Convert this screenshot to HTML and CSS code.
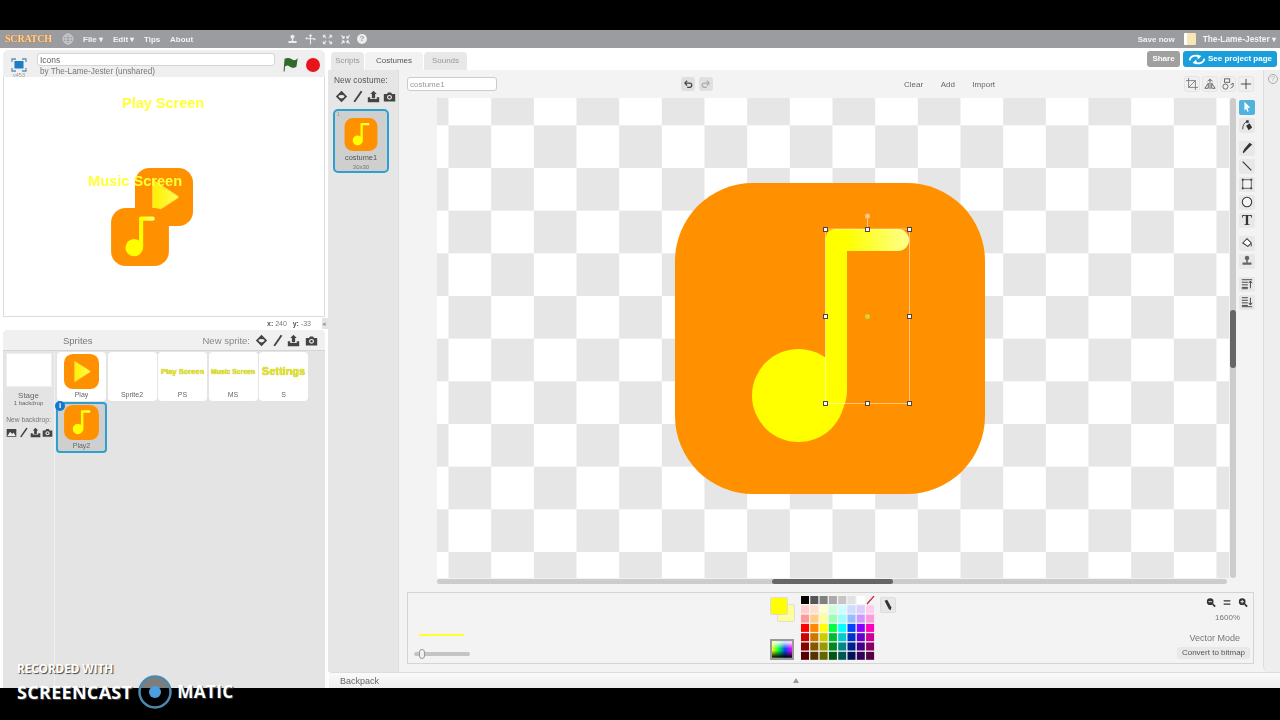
FILE: index.html
```html
<!DOCTYPE html>
<html lang="en">
<head>
    <meta charset="UTF-8">
    <title>Scratch - Icons</title>
    <link rel="stylesheet" href="styles.css">
</head>
<body>
    <svg class="defs" width="0" height="0">
        <defs>
            <linearGradient id="smallFlag" gradientUnits="userSpaceOnUse" x1="172" y1="0" x2="234" y2="0">
                <stop offset="0" stop-color="#ff0"/>
                <stop offset="1" stop-color="#ffff8c"/>
            </linearGradient>
            <linearGradient id="smallPlay" gradientUnits="userSpaceOnUse" x1="30" y1="0" x2="80" y2="0">
                <stop offset="0" stop-color="#ffee00"/>
                <stop offset="1" stop-color="#ffff50"/>
            </linearGradient>
        </defs>
        <symbol id="music" viewBox="0 0 310 311">
            <rect width="310" height="311" rx="78" fill="#ff9100"/>
            <circle cx="123.500" cy="212.500" r="46.500" fill="#ff0"/>
            <path d="M150 225V55Q150 46 159 46H223A11 11 0 0 1 223 68H172V207Q172 217 168 225Z" fill="url(#smallFlag)"/>
        </symbol>
        <symbol id="play" viewBox="0 0 104 104">
            <rect width="104" height="104" rx="26" fill="#ff9100"/>
            <path d="M32 22L76 50Q79 52 76 54L32 82Z" fill="url(#smallPlay)" stroke="#ffe24a" stroke-width="2" stroke-linejoin="round"/>
        </symbol>
        <symbol id="lib" viewBox="0 0 16 16">
            <path d="M8 1L15 8L8 15L1 8Z" fill="currentColor"/>
            <path d="M4 7.500Q8 5 12 7.500Q11 10.500 8 10.500Q5 10.500 4 7.500Z" fill="#eee"/>
        </symbol>
        <symbol id="brush" viewBox="0 0 16 16">
            <path d="M12 1L14 2L5 15L3 14Z" fill="currentColor"/>
        </symbol>
        <symbol id="upload" viewBox="0 0 16 16">
            <path d="M1 9H4V11H12V9H15V15H1Z" fill="currentColor"/>
            <path d="M8 1L12 5H10V10H6V5H4Z" fill="currentColor"/>
        </symbol>
        <symbol id="camera" viewBox="0 0 16 16">
            <path d="M1 5H5L6 3H10L11 5H15V14H1Z" fill="currentColor"/>
            <circle cx="8" cy="9" r="3" fill="#eee"/>
            <circle cx="8" cy="9" r="1.500" fill="currentColor"/>
        </symbol>
        <symbol id="stamp" viewBox="0 0 16 16">
            <circle cx="8" cy="4" r="3" fill="currentColor"/>
            <path d="M7 6H9V10H14V13H2V10H7Z" fill="currentColor"/>
        </symbol>
    </svg>

    <div class="letterbox"></div>

    <header class="menubar">
        <span class="logo">SCRATCH</span>
        <svg class="globe" viewBox="0 0 12 12"><circle cx="6" cy="6" r="5"/><ellipse cx="6" cy="6" rx="2.200" ry="5"/><path d="M1 6H11M2 3.200H10M2 8.800H10"/></svg>
        <span class="menu-item file">File ▾</span>
        <span class="menu-item edit">Edit ▾</span>
        <span class="menu-item tips">Tips</span>
        <span class="menu-item about">About</span>
        <div class="menu-tools">
            <svg viewBox="0 0 16 16"><use href="#stamp"/></svg>
            <svg viewBox="0 0 16 16"><path d="M8 1V15M1 7H15M8 1L6 3M8 1L10 3M1 7L3 5M15 7L13 9" stroke="currentColor" stroke-width="1.600" fill="none"/></svg>
            <svg viewBox="0 0 16 16"><path d="M2 2L6 6M14 2L10 6M2 14L6 10M14 14L10 10M2 2H5M2 2V5M14 2H11M14 2V5M2 14H5M2 14V11M14 14H11M14 14V11" stroke="currentColor" stroke-width="1.600" fill="none"/></svg>
            <svg viewBox="0 0 16 16"><path d="M2 2L6 6M14 2L10 6M2 14L6 10M14 14L10 10M6 6H3M6 6V3M10 6H13M10 6V3M6 10H3M6 10V13M10 10H13M10 10V13" stroke="currentColor" stroke-width="1.600" fill="none"/></svg>
            <span class="help-dot">?</span>
        </div>
        <div class="account">
            <span class="save-now">Save now</span>
            <span class="folder"></span>
            <span class="username">The-Lame-Jester ▾</span>
        </div>
    </header>

    <main class="workspace">
        <section class="left-col">
            <div class="stage-head">
                <div class="fullscreen">
                    <svg viewBox="0 0 16 14"><rect x="3.500" y="3" width="9" height="7.500" fill="#1c7cc4"/><path d="M1 4V1H5M11 1H15V4M1 10V13H5M11 13H15V10" stroke="#5a94bd" stroke-width="1.300" fill="none"/></svg>
                    <span>v453</span>
                </div>
                <div class="project-meta">
                    <input class="project-name" type="text" value="Icons">
                    <span class="project-by">by The-Lame-Jester (unshared)</span>
                </div>
                <svg class="flag" viewBox="0 0 14 14"><path d="M2 1.500L1 13.500M2 2Q5 .500 8 2.500T13 2.500L12 9Q9 10.500 6.500 8.500T1.500 8.500Z" fill="#2e6b2c" stroke="#2e6b2c"/></svg>
                <span class="stop"></span>
            </div>
            <div class="stage">
                <span class="stage-text play-screen">Play Screen</span>
                <svg class="stage-icon stage-play"><use href="#play"/></svg>
                <svg class="stage-icon stage-music"><use href="#music"/></svg>
                <span class="stage-text music-screen">Music Screen</span>
            </div>
            <div class="coords">
                <span><b>x:</b> 240 &nbsp;&nbsp;<b>y:</b> -33</span>
                <span class="collapse">◂</span>
            </div>
            <div class="sprites">
                <div class="sprites-head">
                    <span class="sprites-title">Sprites</span>
                    <span class="new-sprite">New sprite:</span>
                    <svg class="act"><use href="#lib"/></svg>
                    <svg class="act"><use href="#brush"/></svg>
                    <svg class="act"><use href="#upload"/></svg>
                    <svg class="act"><use href="#camera"/></svg>
                </div>
                <div class="sprites-body">
                    <aside class="stage-col">
                        <div class="stage-thumb"></div>
                        <div class="stage-label">Stage</div>
                        <div class="stage-sub">1 backdrop</div>
                        <div class="new-backdrop">New backdrop:</div>
                        <div class="backdrop-acts">
                            <svg viewBox="0 0 16 16"><path d="M1 3H15V14H1Z" fill="#444"/><path d="M2 13L6 7L9 10L11 8L14 13Z" fill="#eee"/></svg>
                            <svg><use href="#brush"/></svg>
                            <svg><use href="#upload"/></svg>
                            <svg><use href="#camera"/></svg>
                        </div>
                    </aside>
                    <div class="sprite-grid">
                        <div class="tile">
                            <svg class="tile-icon"><use href="#play"/></svg>
                            <span>Play</span>
                        </div>
                        <div class="tile">
                            <div class="tile-pic"></div>
                            <span>Sprite2</span>
                        </div>
                        <div class="tile">
                            <div class="tile-pic tile-word">Play Screen</div>
                            <span>PS</span>
                        </div>
                        <div class="tile">
                            <div class="tile-pic tile-word small">Music Screen</div>
                            <span>MS</span>
                        </div>
                        <div class="tile">
                            <div class="tile-pic tile-word big">Settings</div>
                            <span>S</span>
                        </div>
                        <div class="tile selected">
                            <span class="info">i</span>
                            <svg class="tile-icon"><use href="#music"/></svg>
                            <span>Play2</span>
                        </div>
                    </div>
                </div>
            </div>
        </section>

        <section class="right-col">
            <div class="top-row">
                <nav class="tabs">
                    <span class="tab">Scripts</span>
                    <span class="tab active">Costumes</span>
                    <span class="tab">Sounds</span>
                </nav>
                <span class="share">Share</span>
                <span class="see-page">
                    <svg viewBox="0 0 18 12"><path d="M1 7A6 5 0 0 1 11 3M17 5A6 5 0 0 1 7 9" stroke="#fff" stroke-width="2" fill="none"/><path d="M9 .500L14 2L10 6ZM9 11.500L4 10L8 6Z" fill="#fff"/></svg>
                    See project page
                </span>
            </div>
            <div class="main-panel">
                <aside class="costumes">
                    <div class="new-costume">New costume:</div>
                    <div class="costume-acts">
                        <svg><use href="#lib"/></svg>
                        <svg><use href="#brush"/></svg>
                        <svg><use href="#upload"/></svg>
                        <svg><use href="#camera"/></svg>
                    </div>
                    <div class="costume-card">
                        <span class="costume-num">1</span>
                        <svg class="costume-icon"><use href="#music"/></svg>
                        <span class="costume-name">costume1</span>
                        <span class="costume-size">30x30</span>
                    </div>
                </aside>

                <div class="editor">
                    <div class="edit-bar">
                        <input class="costume-input" type="text" value="costume1">
                        <div class="undo-group">
                            <span class="ed-btn"><svg viewBox="0 0 12 12"><path d="M2 5H8A2.500 2.500 0 0 1 8 10H5M2 5L5 2M2 5L5 8" stroke="#444" stroke-width="1.500" fill="none"/></svg></span>
                            <span class="ed-btn"><svg viewBox="0 0 12 12"><path d="M10 5H4A2.500 2.500 0 0 0 4 10H7M10 5L7 2M10 5L7 8" stroke="#aaa" stroke-width="1.500" fill="none"/></svg></span>
                        </div>
                        <div class="file-group">
                            <span>Clear</span>
                            <span>Add</span>
                            <span>Import</span>
                        </div>
                        <div class="view-group">
                            <span class="view-btn"><svg viewBox="0 0 14 14"><path d="M3 0V11H14M0 3H11V14M3 11L11 3" stroke="#777" fill="none"/></svg></span>
                            <span class="view-btn"><svg viewBox="0 0 14 14"><path d="M5 6L1 12H5ZM9 6V12H13Z" stroke="#555" fill="none"/><path d="M7 1V13M4 4Q7 0 10 4" stroke="#555" fill="none"/></svg></span>
                            <span class="view-btn"><svg viewBox="0 0 14 14"><rect x="3" y="1" width="6" height="4" stroke="#555" fill="none"/><circle cx="4" cy="10" r="3" stroke="#555" fill="none"/><path d="M10 8L13 6V10L10 12" stroke="#555" fill="none"/></svg></span>
                            <span class="view-btn"><svg viewBox="0 0 14 14"><path d="M7 1V13M1 7H13" stroke="#333"/></svg></span>
                        </div>
                    </div>

                    <div class="canvas-row">
                        <div class="canvas">
                            <svg class="art" viewBox="437 98 792 480">
                                <defs>
                                    <linearGradient id="flagFade" gradientUnits="userSpaceOnUse" x1="847" y1="0" x2="909" y2="0">
                                        <stop offset="0" stop-color="#ff0"/>
                                        <stop offset="1" stop-color="#ffff8c"/>
                                    </linearGradient>
                                </defs>
                                <rect x="675" y="183" width="310" height="311" rx="78" fill="#ff9100"/>
                                <circle cx="798.500" cy="395.500" r="46.500" fill="#ff0"/>
                                <path d="M825.500 408V240Q825.500 229 836 229H898A11 11 0 0 1 898 251H847V390Q847 400 843 408Z" fill="url(#flagFade)"/>
                                <path d="M825.500 229H909.500V403.500H825.500Z" fill="none" stroke="#fff" stroke-opacity=".5"/>
                                <path d="M867.500 229V217" stroke="#fff" stroke-opacity=".5"/>
                                <circle cx="867.500" cy="216" r="2.500" fill="#ffc98a"/>
                                <circle cx="867.500" cy="316.500" r="2.500" fill="#d8d040"/>
                                <g class="handles">
                                    <rect x="823.500" y="227.500" width="4" height="4"/>
                                    <rect x="865.500" y="227.500" width="4" height="4"/>
                                    <rect x="907.500" y="227.500" width="4" height="4"/>
                                    <rect x="823.500" y="314.500" width="4" height="4"/>
                                    <rect x="907.500" y="314.500" width="4" height="4"/>
                                    <rect x="823.500" y="401.500" width="4" height="4"/>
                                    <rect x="865.500" y="401.500" width="4" height="4"/>
                                    <rect x="907.500" y="401.500" width="4" height="4"/>
                                </g>
                            </svg>
                        </div>
                        <div class="vscroll"><div class="vthumb"></div></div>
                        <div class="tools">
                            <div class="tool-group">
                                <span class="tool on"><svg viewBox="0 0 14 14"><path d="M4 1L11 8H7.500L9 12L7.500 12.500L6 9L4 11Z" fill="#fff"/></svg></span>
                                <span class="tool"><svg viewBox="0 0 14 14"><path d="M2 12Q2 5 7 3" stroke="#333" fill="none"/><rect x="6" y="1.500" width="3" height="3" fill="#333"/><path d="M6 8L10 5L13 10L9 13Z" fill="#333"/></svg></span>
                            </div>
                            <div class="tool-group">
                                <span class="tool"><svg viewBox="0 0 14 14"><path d="M10 1L13 3L6 10L3 13L2 12L4 8Z" fill="#333"/></svg></span>
                                <span class="tool"><svg viewBox="0 0 14 14"><path d="M2 2L12 12" stroke="#333" stroke-width="1.300"/></svg></span>
                                <span class="tool"><svg viewBox="0 0 14 14"><rect x="2" y="2" width="10" height="10" fill="#f4f4f4" stroke="#666" stroke-width="1.200"/><path d="M1 1H3V3H1ZM11 1H13V3H11ZM1 11H3V13H1ZM11 11H13V13H11Z" fill="#333"/></svg></span>
                                <span class="tool"><svg viewBox="0 0 14 14"><circle cx="7" cy="7" r="5.500" fill="#f4f4f4" stroke="#333" stroke-width="1.200"/></svg></span>
                                <span class="tool tool-t">T</span>
                            </div>
                            <div class="tool-group">
                                <span class="tool"><svg viewBox="0 0 14 14"><path d="M2 7L7 2L12 7L8 11Z" fill="#fff" stroke="#333" stroke-width="1.200"/><path d="M12 8V11" stroke="#333"/></svg></span>
                                <span class="tool"><svg viewBox="0 0 16 16"><use href="#stamp"/></svg></span>
                            </div>
                            <div class="tool-group">
                                <span class="tool"><svg viewBox="0 0 14 14"><path d="M1 2H13M1 5H8M1 8H8M1 11H8M1 12.500H8M11 12V4M9 6L11 3.500L13 6" stroke="#333" fill="none"/></svg></span>
                                <span class="tool"><svg viewBox="0 0 14 14"><path d="M1 2H8M1 5H8M1 8H8M1 11H8M1 12.500H13M11 2V10M9 8L11 10.500L13 8" stroke="#333" fill="none"/></svg></span>
                            </div>
                        </div>
                    </div>
                    <div class="hscroll"><div class="hthumb"></div></div>

                    <div class="paint-panel">
                        <div class="stroke-col">
                            <div class="stroke-line"></div>
                            <div class="slider"><span class="knob"></span></div>
                        </div>
                        <div class="swatch-col">
                            <div class="swatches">
                                <span class="swatch-back"></span>
                                <span class="swatch-front"></span>
                            </div>
                            <svg class="spectrum" viewBox="0 0 22 18">
                                <defs>
                                    <linearGradient id="hue">
                                        <stop offset="0" stop-color="#ff0"/>
                                        <stop offset=".33" stop-color="#0f4"/>
                                        <stop offset=".66" stop-color="#04f"/>
                                        <stop offset="1" stop-color="#f0f"/>
                                    </linearGradient>
                                    <linearGradient id="shade" x1="0" y1="0" x2="0" y2="1">
                                        <stop offset="0" stop-color="#fff"/>
                                        <stop offset=".45" stop-color="#fff" stop-opacity="0"/>
                                        <stop offset=".55" stop-color="#000" stop-opacity="0"/>
                                        <stop offset="1" stop-color="#000"/>
                                    </linearGradient>
                                </defs>
                                <rect width="22" height="18" fill="url(#hue)"/>
                                <rect width="22" height="18" fill="url(#shade)"/>
                            </svg>
                        </div>
                        <svg class="palette" viewBox="0 0 74 64">
                            <rect x="0" y="0" width="8" height="8" fill="#000"/><rect x="9.300" y="0" width="8" height="8" fill="#555"/><rect x="18.600" y="0" width="8" height="8" fill="#808080"/><rect x="27.900" y="0" width="8" height="8" fill="#aaa"/><rect x="37.200" y="0" width="8" height="8" fill="#c6c6c6"/><rect x="46.500" y="0" width="8" height="8" fill="#e2e2e2"/><rect x="55.800" y="0" width="8" height="8" fill="#fff"/><path d="M66 8L73 0" stroke="#c22030" stroke-width="1.200"/>
                            <rect x="0" y="9.300" width="8" height="8" fill="#fcc"/><rect x="9.300" y="9.300" width="8" height="8" fill="#ffe0cc"/><rect x="18.600" y="9.300" width="8" height="8" fill="#ffc"/><rect x="27.900" y="9.300" width="8" height="8" fill="#cfd"/><rect x="37.200" y="9.300" width="8" height="8" fill="#cff"/><rect x="46.500" y="9.300" width="8" height="8" fill="#cdf"/><rect x="55.800" y="9.300" width="8" height="8" fill="#dcf"/><rect x="65.100" y="9.300" width="8" height="8" fill="#fce"/>
                            <rect x="0" y="18.600" width="8" height="8" fill="#f99"/><rect x="9.300" y="18.600" width="8" height="8" fill="#fc8"/><rect x="18.600" y="18.600" width="8" height="8" fill="#ff9"/><rect x="27.900" y="18.600" width="8" height="8" fill="#9fb"/><rect x="37.200" y="18.600" width="8" height="8" fill="#9ff"/><rect x="46.500" y="18.600" width="8" height="8" fill="#9bf"/><rect x="55.800" y="18.600" width="8" height="8" fill="#c9f"/><rect x="65.100" y="18.600" width="8" height="8" fill="#f9d"/>
                            <rect x="0" y="27.900" width="8" height="8" fill="#f00"/><rect x="9.300" y="27.900" width="8" height="8" fill="#f80"/><rect x="18.600" y="27.900" width="8" height="8" fill="#ff0"/><rect x="27.900" y="27.900" width="8" height="8" fill="#0f4"/><rect x="37.200" y="27.900" width="8" height="8" fill="#0ff"/><rect x="46.500" y="27.900" width="8" height="8" fill="#04f"/><rect x="55.800" y="27.900" width="8" height="8" fill="#80f"/><rect x="65.100" y="27.900" width="8" height="8" fill="#f0b"/>
                            <rect x="0" y="37.200" width="8" height="8" fill="#c00"/><rect x="9.300" y="37.200" width="8" height="8" fill="#c70"/><rect x="18.600" y="37.200" width="8" height="8" fill="#cc0"/><rect x="27.900" y="37.200" width="8" height="8" fill="#0b3"/><rect x="37.200" y="37.200" width="8" height="8" fill="#0cc"/><rect x="46.500" y="37.200" width="8" height="8" fill="#03c"/><rect x="55.800" y="37.200" width="8" height="8" fill="#60c"/><rect x="65.100" y="37.200" width="8" height="8" fill="#c09"/>
                            <rect x="0" y="46.500" width="8" height="8" fill="#800"/><rect x="9.300" y="46.500" width="8" height="8" fill="#850"/><rect x="18.600" y="46.500" width="8" height="8" fill="#990"/><rect x="27.900" y="46.500" width="8" height="8" fill="#082"/><rect x="37.200" y="46.500" width="8" height="8" fill="#088"/><rect x="46.500" y="46.500" width="8" height="8" fill="#028"/><rect x="55.800" y="46.500" width="8" height="8" fill="#408"/><rect x="65.100" y="46.500" width="8" height="8" fill="#806"/>
                            <rect x="0" y="55.800" width="8" height="8" fill="#500"/><rect x="9.300" y="55.800" width="8" height="8" fill="#530"/><rect x="18.600" y="55.800" width="8" height="8" fill="#660"/><rect x="27.900" y="55.800" width="8" height="8" fill="#051"/><rect x="37.200" y="55.800" width="8" height="8" fill="#055"/><rect x="46.500" y="55.800" width="8" height="8" fill="#015"/><rect x="55.800" y="55.800" width="8" height="8" fill="#305"/><rect x="65.100" y="55.800" width="8" height="8" fill="#504"/>
                        </svg>
                        <span class="picker"><svg viewBox="0 0 14 14"><path d="M3 2L6 1L11 10L10 13L8 12Z" fill="#333"/></svg></span>
                        <div class="mode-col">
                            <div class="zoom-btns">
                                <svg viewBox="0 0 12 12"><circle cx="5" cy="5" r="4" fill="#333"/><path d="M3 5H7" stroke="#fff"/><path d="M8 8L11 11" stroke="#333" stroke-width="2"/></svg>
                                <svg viewBox="0 0 12 12"><path d="M2 4H10M2 8H10" stroke="#333" stroke-width="1.500"/></svg>
                                <svg viewBox="0 0 12 12"><circle cx="5" cy="5" r="4" fill="#333"/><path d="M3 5H7M5 3V7" stroke="#fff"/><path d="M8 8L11 11" stroke="#333" stroke-width="2"/></svg>
                            </div>
                            <div class="zoom-pct">1600%</div>
                            <div class="mode-name">Vector Mode</div>
                            <div class="convert">Convert to bitmap</div>
                        </div>
                    </div>
                </div>

                <aside class="help-strip"><span class="help-circle">?</span></aside>
            </div>
            <div class="backpack">
                <span>Backpack</span>
                <span class="backpack-arrow"></span>
            </div>
        </section>
    </main>

    <div class="letterbox bottom"></div>

    <div class="watermark">
        <div class="rec-with">RECORDED WITH</div>
        <div class="rec-brand">
            <span>SCREENCAST</span>
            <svg viewBox="0 0 36 36"><circle cx="18" cy="18" r="15.500" fill="#000" fill-opacity=".45" stroke="#4d88ad" stroke-width="2.500"/><circle cx="18" cy="18" r="6" fill="#4c9ee0"/></svg>
            <span class="matic">MATIC</span>
        </div>
    </div>
</body>
</html>
```

FILE: styles.css
```css
* {
    box-sizing: border-box;
}

body {
    margin: 0;
    width: 1280px;
    height: 720px;
    overflow: hidden;
    position: relative;
    display: flex;
    flex-direction: column;
    background: #000;
    font-family: "Liberation Sans", Arial, sans-serif;
    color: #666;
}

svg {
    display: block;
}

.defs {
    position: absolute;
}

.letterbox {
    height: 30px;
    background: #000;
}

.letterbox.bottom {
    height: 32px;
}

/* menu bar */
.menubar {
    height: 18px;
    background: #9b9ca0;
    display: flex;
    align-items: center;
    color: #f2f2f2;
    font-size: 8px;
    font-weight: bold;
    filter: blur(.3px);
}

.logo {
    margin-left: 5px;
    width: 45px;
    line-height: 12px;
    text-align: center;
    font-family: "Liberation Serif", serif;
    font-size: 10px;
    color: #f8d8a0;
    text-shadow: 0 0 1px #d0701c, 0 0 1px #d0701c;
    letter-spacing: -.2px;
}

.globe {
    width: 12px;
    height: 12px;
    margin-left: 12px;
    fill: none;
    stroke: #d8d8d8;
    stroke-width: .8;
}

.menu-item.file { margin-left: 9px; width: 30px; }
.menu-item.edit { width: 31px; }
.menu-item.tips { width: 26px; }
.menu-item.about { width: 26px; }

.menu-tools {
    margin-left: 91px;
    display: flex;
    align-items: center;
    gap: 6.500px;
    color: #ececec;
}

.menu-tools svg {
    width: 11px;
    height: 11px;
}

.help-dot {
    width: 10px;
    height: 10px;
    border-radius: 50%;
    background: #ececec;
    color: #9b9ca0;
    font-size: 8px;
    line-height: 10px;
    text-align: center;
}

.account {
    margin-left: auto;
    margin-right: 4px;
    display: flex;
    align-items: center;
}

.save-now {
    font-size: 8px;
}

.folder {
    width: 12px;
    height: 12px;
    margin: 0 7px 0 9px;
    background: #f6e7b4;
    border-radius: 1px;
    border-left: 3px solid #fff;
}

.username {
    font-size: 8.400px;
}

/* main area */
.workspace {
    height: 640px;
    display: flex;
    background: #fff;
    filter: blur(.3px);
}

.left-col {
    width: 328px;
    padding: 2px 3px 0;
    display: flex;
    flex-direction: column;
}

.stage-head {
    height: 27px;
    background: #efefef;
    border-radius: 5px 5px 0 0;
    display: flex;
    padding-left: 8px;
    position: relative;
}

.fullscreen {
    width: 16px;
    margin-top: 8px;
    text-align: center;
}

.fullscreen svg {
    width: 16px;
    height: 14px;
}

.fullscreen span {
    display: block;
    font-size: 5.500px;
    color: #999;
    line-height: 6px;
}

.project-meta {
    width: 238px;
    margin-left: 10px;
    padding-top: 3px;
}

.project-name {
    display: block;
    width: 238px;
    height: 13px;
    padding: 0 2px;
    border: 1px solid #d4d4d4;
    border-radius: 3px;
    background: #fff;
    font: 8.500px "Liberation Sans", Arial, sans-serif;
    color: #666;
}

.project-by {
    display: block;
    margin: 0 0 0 3px;
    font-size: 8.200px;
    line-height: 11px;
    color: #777;
}

.flag {
    width: 15px;
    height: 15px;
    margin: 7px 0 0 8px;
}

.stop {
    width: 14px;
    height: 14px;
    margin: 8px 0 0 8px;
    border-radius: 50%;
    background: #e8141c;
}

.stage {
    height: 240px;
    width: 322px;
    background: #fff;
    border: 1px solid #dcdcdc;
    border-top: 0;
    position: relative;
    overflow: hidden;
}

.stage-text {
    position: absolute;
    font-size: 14.500px;
    font-weight: bold;
    color: #ffff3a;
    white-space: nowrap;
}

.play-screen {
    left: 118px;
    top: 18px;
}

.music-screen {
    left: 84px;
    top: 96px;
    font-size: 14.600px;
}

.stage-icon {
    position: absolute;
    width: 58px;
    height: 58px;
}

.stage-play {
    left: 131px;
    top: 91px;
}

.stage-music {
    left: 107px;
    top: 131px;
}

.coords {
    height: 13px;
    display: flex;
    justify-content: flex-end;
    align-items: center;
    font-size: 7px;
    color: #777;
}

.coords b {
    color: #555;
}

.collapse {
    width: 6px;
    margin: 0 -3px 0 11px;
    color: #999;
    background: #e4e4e4;
    font-size: 7px;
    line-height: 11px;
}

.sprites {
    flex: 1;
    width: 322px;
    background: #e4e4e4;
    border-radius: 5px 5px 0 0;
    overflow: hidden;
}

.sprites-head {
    height: 21px;
    background: #f0f0f0;
    border-bottom: 1px solid #d4d4d4;
    display: flex;
    align-items: center;
    padding-left: 60px;
    gap: 3px;
    color: #777;
    font-size: 9.500px;
}

.new-sprite {
    margin-left: auto;
    margin-right: 2px;
    color: #888;
}

.act {
    width: 13px;
    height: 13px;
    color: #444;
}

.sprites-head .act:last-child {
    margin: 0 7px 0 2px;
}

.sprites-body {
    display: flex;
    height: 336px;
}

.stage-col {
    width: 52px;
    border-right: 1px solid #f0f0f0;
    text-align: center;
    color: #666;
    padding-top: 2px;
}

.stage-thumb {
    width: 46px;
    height: 34px;
    margin: 0 auto 3px 3px;
    background: #fff;
    border: 1px solid #eee;
}

.stage-label {
    font-size: 8px;
    margin-top: 5px;
    line-height: 8px;
}

.stage-sub {
    font-size: 6px;
    line-height: 7px;
}

.new-backdrop {
    font-size: 6.700px;
    margin-top: 9px;
    white-space: nowrap;
    color: #777;
}

.backdrop-acts {
    display: flex;
    justify-content: center;
    gap: 1px;
    margin: 4px 0 0 1px;
    color: #444;
}

.backdrop-acts svg {
    width: 11px;
    height: 11px;
}

.sprite-grid {
    flex: 1;
    padding: 1px 0 0 2px;
    display: flex;
    flex-wrap: wrap;
    align-content: flex-start;
    gap: 2px 1.500px;
}

.tile {
    width: 49px;
    height: 49px;
    background: #fff;
    border-radius: 4px;
    position: relative;
    display: flex;
    flex-direction: column;
    align-items: center;
    font-size: 7px;
    color: #666;
}

.tile-icon {
    width: 35px;
    height: 35px;
    margin-top: 2px;
}

.tile-pic {
    width: 100%;
    height: 35px;
    margin-top: 2px;
    text-align: center;
    line-height: 35px;
}

.tile span:last-child {
    line-height: 8px;
    margin-top: 2px;
}

.tile-word {
    font-size: 7.600px;
    font-weight: bold;
    color: #e8e820;
    text-shadow: 0 0 1px #909000;
    white-space: nowrap;
    overflow: hidden;
}

.tile-word.small {
    font-size: 6.800px;
}

.tile-word.big {
    font-size: 11px;
}

.tile.selected {
    width: 51px;
    height: 51px;
    margin: -1px;
    background: #cfcfcf;
    border: 2px solid #2f9fd0;
}

.tile.selected .tile-icon {
    margin-top: 1px;
}

.info {
    position: absolute;
    left: -3px;
    top: -3px;
    width: 10px;
    height: 10px;
    border-radius: 50%;
    background: #1478cc;
    color: #fff;
    font-size: 8px;
    font-weight: bold;
    line-height: 10px;
    text-align: center;
}

/* right column */
.right-col {
    flex: 1;
    display: flex;
    flex-direction: column;
}

.top-row {
    height: 22px;
    padding: 3px 3px 0 3px;
    display: flex;
    align-items: flex-start;
}

.tabs {
    display: flex;
    gap: 1px;
    margin-right: auto;
    height: 19px;
    padding-top: 1px;
}

.tab {
    padding: 0 6px;
    height: 18px;
    line-height: 17px;
    font-size: 8px;
    color: #999;
    background: #e8e8e8;
    border-radius: 4px 4px 0 0;
}

.tab:first-child {
    width: 33px;
    padding: 0;
    text-align: center;
}

.tab:last-child {
    width: 43px;
    padding: 0;
    text-align: center;
}

.tab.active {
    width: 58px;
    color: #555;
    background: #f2f2f2;
    text-align: center;
    padding: 0;
}

.share,
.see-page {
    height: 16px;
    border-radius: 3px;
    color: #fff;
    font-size: 8px;
    font-weight: bold;
    line-height: 16px;
}

.share {
    width: 33px;
    background: #a0a0a0;
    text-align: center;
    margin-right: 3px;
}

.see-page {
    width: 94px;
    background: #1a9fdc;
    display: flex;
    align-items: center;
    gap: 3px;
    padding-left: 6px;
}

.see-page svg {
    width: 16px;
    height: 11px;
}

.main-panel {
    height: 602px;
    display: flex;
    background: #f3f3f3;
}

.costumes {
    width: 71px;
    background: #e6e6e6;
    padding: 5px 0 0 6px;
    border-right: 1px solid #ddd;
}

.new-costume {
    font-size: 8.300px;
    color: #555;
    line-height: 10px;
    white-space: nowrap;
    letter-spacing: .1px;
}

.costume-acts {
    display: flex;
    gap: 3px;
    margin: 5px 0 0 1px;
    color: #444;
}

.costume-acts svg {
    width: 13px;
    height: 13px;
}

.costume-card {
    width: 56px;
    height: 64px;
    margin: 6px 0 0 -1px;
    background: #cfcfcf;
    border: 2px solid #2f9fd0;
    border-radius: 5px;
    display: flex;
    flex-direction: column;
    align-items: center;
    position: relative;
    color: #555;
}

.costume-num {
    position: absolute;
    left: 2px;
    top: 0;
    font-size: 5.500px;
    color: #999;
}

.costume-icon {
    width: 34px;
    height: 34px;
    margin-top: 7px;
}

.costume-name {
    font-size: 7.400px;
    line-height: 8px;
    margin-top: 3px;
}

.costume-size {
    font-size: 6px;
    line-height: 7px;
    margin-top: 2px;
    color: #777;
}

.editor {
    width: 864px;
    padding-left: 8px;
}

.edit-bar {
    height: 28px;
    display: flex;
    align-items: center;
}

.costume-input {
    width: 90px;
    height: 14px;
    padding: 0 2px;
    border: 1px solid #ccc;
    border-radius: 3px;
    background: #fff;
    font: 8px "Liberation Sans", Arial, sans-serif;
    color: #999;
}

.undo-group {
    margin-left: 184px;
    display: flex;
    gap: 4px;
}

.ed-btn {
    width: 14px;
    height: 14px;
    background: #e0e0e0;
    border-radius: 3px;
    padding: 2px;
}

.file-group {
    margin-left: 191px;
    display: flex;
    gap: 17.500px;
    font-size: 8px;
    color: #666;
}

.view-group {
    margin-left: auto;
    margin-right: 9px;
    display: flex;
    gap: 2px;
}

.view-btn {
    width: 16px;
    height: 16px;
    padding: 1px;
    background: #f0f0f0;
    border: 1px solid #e4e4e4;
    border-radius: 3px;
}

.canvas-row {
    height: 480px;
    display: flex;
}

.canvas {
    width: 792px;
    height: 480px;
    margin-left: 30px;
    overflow: hidden;
    background-color: #fff;
    background-image: conic-gradient(#e6e6e6 25%, transparent 0 50%, #e6e6e6 0 75%, transparent 0);
    background-size: 85.330px 85.330px;
    background-position: 54.170px 27.300px;
}

.art {
    width: 792px;
    height: 480px;
}

.handles rect {
    fill: #fff;
    stroke: #53433a;
}

.vscroll {
    width: 6px;
    height: 480px;
    margin-left: 1px;
    background: #ccc;
    border-radius: 3px;
    position: relative;
}

.vthumb {
    position: absolute;
    left: 0;
    top: 212px;
    width: 6px;
    height: 58px;
    background: #666;
    border-radius: 3px;
}

.tools {
    width: 16px;
    margin-left: 3px;
    padding-top: 2px;
    display: flex;
    flex-direction: column;
    gap: 8px;
}

.tool-group {
    display: flex;
    flex-direction: column;
    gap: 3px;
}

.tool {
    width: 16px;
    height: 15px;
    padding: 1px 2px;
    background: #e8e8e8;
    border-radius: 2px;
}

.tool.on {
    background: #4fb3de;
}

.tool-t {
    font: bold 15px "Liberation Serif", serif;
    line-height: 15px;
    color: #333;
    text-align: center;
    padding: 0;
}

.hscroll {
    width: 790px;
    height: 5px;
    margin: 1px 0 0 30px;
    background: #ccc;
    border-radius: 3px;
    position: relative;
}

.hthumb {
    position: absolute;
    left: 335px;
    top: 0;
    width: 121px;
    height: 5px;
    background: #666;
    border-radius: 3px;
}

.paint-panel {
    width: 847px;
    height: 72px;
    margin-top: 8px;
    border: 1px solid #d4d4d4;
    display: flex;
}

.stroke-col {
    width: 362px;
}

.stroke-line {
    width: 45px;
    height: 2px;
    margin: 41px 0 0 11px;
    background: #ffff30;
}

.slider {
    width: 56px;
    height: 4px;
    margin: 16px 0 0 6px;
    background: #c4c4c4;
    border-radius: 2px;
    position: relative;
}

.knob {
    position: absolute;
    left: 5px;
    top: -3px;
    width: 6px;
    height: 10px;
    background: #f0f0f0;
    border: 1px solid #999;
    border-radius: 3px;
}

.swatch-col {
    width: 31px;
    padding-top: 4px;
}

.swatches {
    width: 26px;
    height: 26px;
    position: relative;
}

.swatch-front,
.swatch-back {
    position: absolute;
    width: 18px;
    height: 18px;
    border-radius: 2px;
    border: 1px solid #ddd;
}

.swatch-back {
    left: 7px;
    top: 7px;
    background: #ffff99;
}

.swatch-front {
    left: 0;
    top: 0;
    background: #ff0;
}

.spectrum {
    width: 24px;
    height: 21px;
    margin-top: 16px;
    border: 2px solid #999;
}

.palette {
    width: 74px;
    height: 64px;
    margin-top: 3px;
}

.picker {
    width: 16px;
    height: 16px;
    margin: 4px 0 0 5px;
    padding: 1px;
    background: #e8e8e8;
    border: 1px solid #ddd;
    border-radius: 2px;
}

.mode-col {
    margin-left: auto;
    width: 73px;
    margin-right: 3px;
    text-align: right;
}

.zoom-btns {
    display: flex;
    justify-content: flex-end;
    gap: 6px;
    margin-top: 4px;
    padding-right: 2px;
}

.zoom-btns svg {
    width: 10px;
    height: 11px;
}

.zoom-pct {
    font-size: 8px;
    color: #777;
    margin-top: 5px;
    padding-right: 10px;
    line-height: 10px;
}

.mode-name {
    font-size: 9px;
    color: #777;
    line-height: 11px;
    margin-top: 10px;
    padding-right: 10px;
}

.convert {
    height: 12px;
    margin-top: 3px;
    line-height: 12px;
    background: #e8e8e8;
    border-radius: 3px;
    text-align: center;
    font-size: 8px;
    color: #555;
}

.help-strip {
    flex: 1;
    background: #eee;
    border-left: 1px solid #ddd;
    border-radius: 0 0 0 6px;
    padding: 4px 0 0 4px;
}

.help-circle {
    display: block;
    width: 10px;
    height: 10px;
    border: 1px solid #aaa;
    border-radius: 50%;
    font-size: 7px;
    line-height: 8px;
    text-align: center;
    color: #aaa;
}

.backpack {
    height: 16px;
    margin-left: 1px;
    padding-left: 11px;
    background: linear-gradient(#fafafa, #eee);
    border-top: 1px solid #ddd;
    border-radius: 3px 0 0 0;
    display: flex;
    align-items: center;
    font-size: 9px;
    color: #666;
}

.backpack-arrow {
    margin-left: 414px;
    border: 3px solid transparent;
    border-top: 0;
    border-bottom: 5px solid #999;
}

/* recorder watermark */
.watermark {
    position: absolute;
    left: 17px;
    top: 661px;
    color: #fff;
    font-family: "Open Sans", sans-serif;
    font-weight: bold;
    text-shadow: 1px 1px 1px #444;
}

.rec-with {
    font-size: 11.800px;
    line-height: 14px;
    letter-spacing: -.1px;
}

.rec-brand {
    display: flex;
    align-items: center;
    font-size: 18px;
    line-height: 36px;
    letter-spacing: .3px;
    margin-top: -1px;
}

.rec-brand svg {
    width: 36px;
    height: 36px;
    margin: 0 4px 0 5px;
}

.matic {
    font-size: 17.200px;
}
```
